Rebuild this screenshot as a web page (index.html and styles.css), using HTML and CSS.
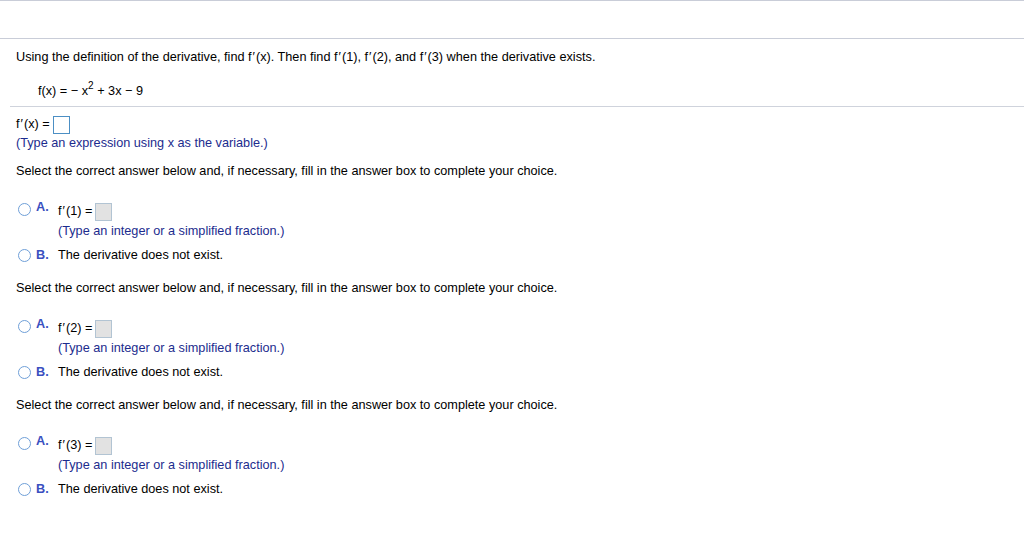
FILE: index.html
```html
<!DOCTYPE html>
<html>
<head>
<meta charset="utf-8">
<link rel="stylesheet" href="styles.css">
</head>
<body>
<div class="topbar"></div>
<div class="question">
  <p class="prompt">Using the definition of the derivative, find f<span class="pr">′</span>(x). Then find f<span class="pr">′</span>(1), f<span class="pr">′</span>(2), and f<span class="pr">′</span>(3) when the derivative exists.</p>
  <p class="func">f(x) = − x<sup>2</sup> + 3x − 9</p>
</div>
<div class="answers">
  <div class="row-box">f<span class="pr">′</span>(x) = <span class="box box-active"></span></div>
  <p class="hint">(Type an expression using x as the variable.)</p>

  <p class="select">Select the correct answer below and, if necessary, fill in the answer box to complete your choice.</p>
  <div class="choice choice-a">
    <span class="radio"></span><span class="letter">A.</span>
    <div class="body">
      <div class="row-box">f<span class="pr">′</span>(1) = <span class="box"></span></div>
      <p class="hint">(Type an integer or a simplified fraction.)</p>
    </div>
  </div>
  <div class="choice choice-b">
    <span class="radio"></span><span class="letter">B.</span>
    <div class="body">The derivative does not exist.</div>
  </div>

  <p class="select">Select the correct answer below and, if necessary, fill in the answer box to complete your choice.</p>
  <div class="choice choice-a">
    <span class="radio"></span><span class="letter">A.</span>
    <div class="body">
      <div class="row-box">f<span class="pr">′</span>(2) = <span class="box"></span></div>
      <p class="hint">(Type an integer or a simplified fraction.)</p>
    </div>
  </div>
  <div class="choice choice-b">
    <span class="radio"></span><span class="letter">B.</span>
    <div class="body">The derivative does not exist.</div>
  </div>

  <p class="select">Select the correct answer below and, if necessary, fill in the answer box to complete your choice.</p>
  <div class="choice choice-a">
    <span class="radio"></span><span class="letter">A.</span>
    <div class="body">
      <div class="row-box">f<span class="pr">′</span>(3) = <span class="box"></span></div>
      <p class="hint">(Type an integer or a simplified fraction.)</p>
    </div>
  </div>
  <div class="choice choice-b">
    <span class="radio"></span><span class="letter">B.</span>
    <div class="body">The derivative does not exist.</div>
  </div>
</div>
</body>
</html>
```

FILE: styles.css
```css
* { box-sizing: border-box; }
html, body { margin: 0; padding: 0; background: #fff; }
body {
  font-family: "Liberation Sans", Arial, sans-serif;
  font-size: 12.7px;
  color: #000;
  line-height: 15px;
}
p { margin: 0; }
.pr { margin: 0 1px 0 1px; }
.topbar {
  height: 39px;
  border-top: 1px solid #c9cdd8;
  border-bottom: 1px solid #c9cdd8;
}
.question {
  margin-left: 10px;
  border-bottom: 1px solid #cfd3dc;
  padding: 11px 0 0 6px;
  height: 68px;
}
.func {
  margin-top: 19px;
  padding-left: 22px;
}
.func sup {
  font-size: 10px;
  line-height: 0;
  position: relative;
  top: -1px;
  vertical-align: super;
}
.answers { padding: 8px 0 0 16px; }
.row-box {
  display: flex;
  align-items: center;
  height: 19px;
}
.box {
  display: inline-block;
  width: 17px;
  height: 18px;
  margin-left: 3px;
  background: #e2e2e2;
  border: 1px solid #b2c4d3;
}
.box-active {
  background: #fff;
  border: 1px solid #4c8fc4;
}
.hint { color: #1c2c8e; margin-top: 2px; }
.choice .hint { margin-top: 3px; }
.select { margin-top: 13px; }
.choice-b + .select { margin-top: 18px; }
.choice {
  display: flex;
  align-items: flex-start;
}
.choice-a { margin-top: 23px; }
.choice-b { margin-top: 9px; }
.radio {
  width: 13px;
  height: 13px;
  border: 1.5px solid #6f9fd8;
  border-radius: 50%;
  margin: 1px 0 0 2px;
  flex: none;
}
.choice-a .radio { margin-top: 1px; }
.letter {
  color: #3a4fc0;
  font-weight: bold;
  width: 22px;
  margin-left: 5px;
  flex: none;
}
.choice-a .letter { margin-top: -2px; }
```
